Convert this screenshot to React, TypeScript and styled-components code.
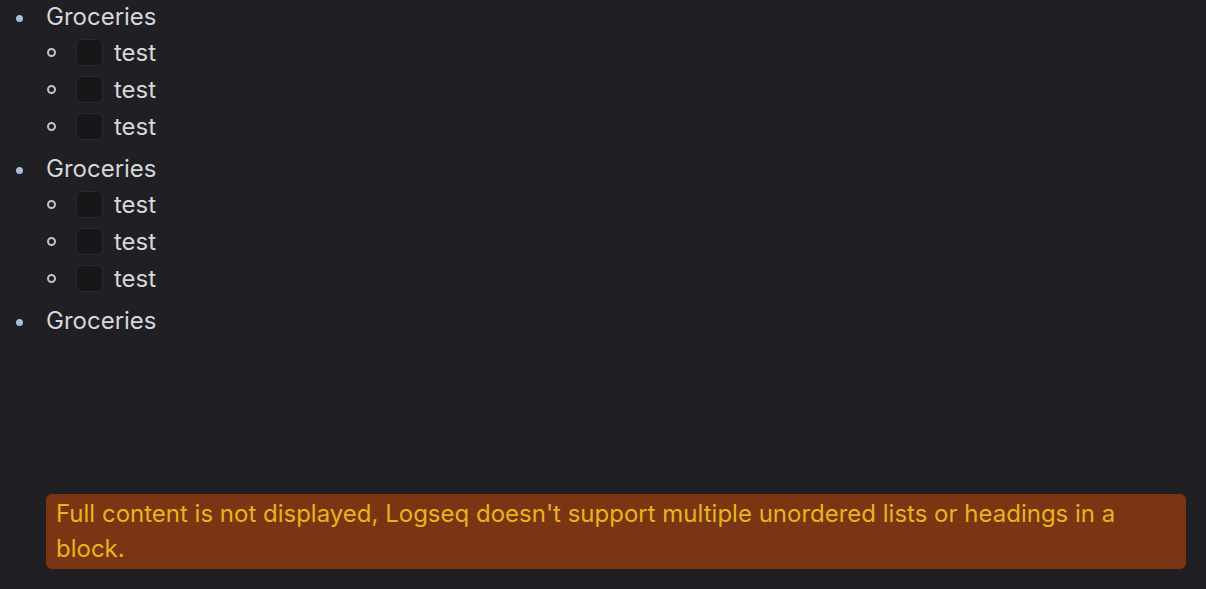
import React from "react";
import styled, { createGlobalStyle } from "styled-components";

const Global = createGlobalStyle`
  html, body {
    margin: 0;
    padding: 0;
    background: #1f1f24;
  }
  body {
    font-family: Inter, "Noto Sans", sans-serif;
    -webkit-font-smoothing: antialiased;
  }
`;

const Page = styled.div`
  width: 1206px;
  height: 589px;
  box-sizing: border-box;
  padding: 1px 20px 0 0;
  background: #1f1f24;
  display: flex;
  flex-direction: column;
  overflow: hidden;
`;

const List = styled.ul`
  list-style: none;
  margin: 0;
  padding: 0;
  display: flex;
  flex-direction: column;
  gap: 8px;
`;

const Item = styled.li`
  display: flex;
  flex-direction: column;
`;

const ItemRow = styled.div`
  display: flex;
  align-items: center;
  height: 32px;
`;

const Dot = styled.span`
  width: 7px;
  height: 7px;
  border-radius: 50%;
  background: #a9bcda;
  margin: 2px 0 0 16px;
`;

const Label = styled.span`
  font-size: 24px;
  color: #d6d6da;
  margin-left: 23px;
  line-height: 1;
`;

const SubList = styled.ul`
  list-style: none;
  margin: 1px 0 0 0;
  padding: 0;
`;

const SubRow = styled.li`
  display: flex;
  align-items: center;
  height: 37px;
`;

const Ring = styled.span`
  box-sizing: border-box;
  width: 9px;
  height: 9px;
  border-radius: 50%;
  border: 2px solid #c2c2c8;
  margin-left: 47px;
`;

const Check = styled.span`
  box-sizing: border-box;
  width: 27px;
  height: 27px;
  border-radius: 6px;
  background: #17171a;
  border: 1px solid #29292f;
  margin-left: 20px;
`;

const SubLabel = styled.span`
  font-size: 24px;
  color: #d6d6da;
  margin-left: 11px;
  line-height: 1;
`;

const Warning = styled.div`
  margin: auto 0 20px 46px;
  padding: 2px 10px 3px 10px;
  background: #7a3512;
  border-radius: 6px;
  color: #e9b320;
  font-size: 24px;
  line-height: 35px;
`;

type Block = { title: string; items: string[] };

const blocks: Block[] = [
  { title: "Groceries", items: ["test", "test", "test"] },
  { title: "Groceries", items: ["test", "test", "test"] },
  { title: "Groceries", items: [] },
];

export default function App() {
  return (
    <>
      <Global />
      <Page>
        <List>
          {blocks.map((b, i) => (
            <Item key={i}>
              <ItemRow>
                <Dot />
                <Label>{b.title}</Label>
              </ItemRow>
              {b.items.length > 0 && (
                <SubList>
                  {b.items.map((t, j) => (
                    <SubRow key={j}>
                      <Ring />
                      <Check />
                      <SubLabel>{t}</SubLabel>
                    </SubRow>
                  ))}
                </SubList>
              )}
            </Item>
          ))}
        </List>
        <Warning>
          Full content is not displayed, Logseq doesn't support multiple unordered lists or headings in a block.
        </Warning>
      </Page>
    </>
  );
}
